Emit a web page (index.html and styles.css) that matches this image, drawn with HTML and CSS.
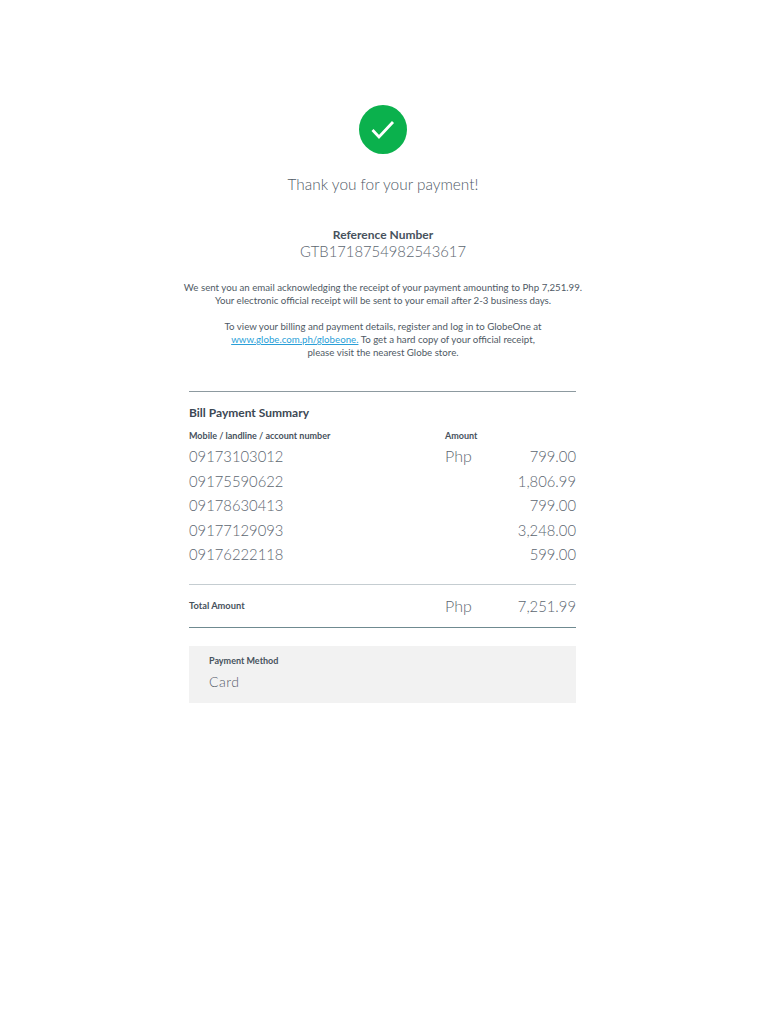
FILE: index.html
```html
<!DOCTYPE html>
<html lang="en">
<head>
  <meta charset="UTF-8" />
  <title>Thank you for your payment</title>
  <link rel="stylesheet" href="styles.css">
</head>
<body>
  <div class="container">
    <svg class="check" width="48" height="49" viewBox="0 0 48 49">
      <ellipse cx="24" cy="24.5" rx="24" ry="24.5" fill="#0bb14d"/>
      <path d="M13.5 25l6.5 7 14-15" fill="none" stroke="#fff" stroke-width="2.8"/>
    </svg>

    <h2>Thank you for your payment!</h2>

    <div class="ref-label">Reference Number</div>
    <div class="ref-number">GTB1718754982543617</div>

    <p class="note">
      We sent you an email acknowledging the receipt of your payment amounting to Php 7,251.99.<br>
      Your electronic official receipt will be sent to your email after 2-3 business days.
    </p>
    <p class="note note-second">
      To view your billing and payment details, register and log in to GlobeOne at<br>
      <a href="#">www.globe.com.ph/globeone.</a> To get a hard copy of your official receipt,<br>
      please visit the nearest Globe store.
    </p>

    <div class="summary">
      <h3>Bill Payment Summary</h3>
      <div class="row head">
        <span>Mobile / landline / account number</span>
        <span>Amount</span>
      </div>
      <div class="row item"><span>09173103012</span><span class="currency">Php</span><span class="amt">799.00</span></div>
      <div class="row item"><span>09175590622</span><span></span><span class="amt">1,806.99</span></div>
      <div class="row item"><span>09178630413</span><span></span><span class="amt">799.00</span></div>
      <div class="row item"><span>09177129093</span><span></span><span class="amt">3,248.00</span></div>
      <div class="row item"><span>09176222118</span><span></span><span class="amt">599.00</span></div>
      <div class="row total">
        <span class="total-label">Total Amount</span>
        <span class="currency">Php</span>
        <span class="amt">7,251.99</span>
      </div>
      <div class="method">
        <div class="method-label">Payment Method</div>
        <div class="method-value">Card</div>
      </div>
    </div>
  </div>
</body>
</html>
```

FILE: styles.css
```css
* {
  box-sizing: border-box;
  margin: 0;
  padding: 0;
  font-family: 'Lato', sans-serif;
}

body {
  background-color: #fff;
  color: #4a5560;
}

.container {
  width: 400px;
  margin-left: 183px;
  padding-top: 105px;
  text-align: center;
}

.check {
  display: block;
  margin: 0 auto;
}

h2 {
  font-weight: 300;
  font-size: 15.4px;
  line-height: 22px;
  margin-top: 19px;
  color: #4f5a66;
}

.ref-label {
  margin-top: 32px;
  font-size: 12px;
  font-weight: 700;
  line-height: 16px;
  color: #47525d;
}

.ref-number {
  font-size: 14.8px;
  font-weight: 300;
  line-height: 16px;
  color: #5c6670;
}

.note {
  margin-top: 22px;
  font-size: 9.7px;
  line-height: 13px;
  white-space: nowrap;
  color: #4f5a65;
}

.note-second {
  margin-top: 13px;
}

.note a {
  color: #2a9fd8;
}

.summary {
  width: 387px;
  margin: 32px 0 0 6px;
  border-top: 1px solid #8d9aa0;
  text-align: left;
}

h3 {
  margin-top: 13px;
  font-size: 12px;
  font-weight: 700;
  line-height: 16px;
  color: #3c4854;
}

.row {
  display: grid;
  grid-template-columns: 256px 50px 1fr;
}

.head {
  margin-top: 8px;
  font-size: 9px;
  font-weight: 700;
  line-height: 14px;
  color: #47525d;
}

.item {
  font-size: 14.8px;
  font-weight: 300;
  line-height: 24.6px;
  color: #5c6670;
}

.head + .item {
  margin-top: 1px;
}

.amt {
  text-align: right;
}

.currency {
  font-size: 16px;
}

.total {
  margin-top: 17px;
  height: 44px;
  border-top: 1px solid #c5cdd1;
  border-bottom: 1px solid #6f8a90;
  align-items: center;
  font-size: 14.8px;
  font-weight: 300;
  color: #5c6670;
}

.total-label {
  font-size: 9.3px;
  font-weight: 700;
  color: #47525d;
}

.method {
  margin-top: 18px;
  height: 57px;
  padding: 8px 20px;
  background: #f2f2f2;
}

.method-label {
  font-size: 9px;
  font-weight: 700;
  line-height: 14px;
  color: #47525d;
}

.method-value {
  margin-top: 4px;
  font-size: 14px;
  font-weight: 300;
  line-height: 20px;
  letter-spacing: 0.5px;
  color: #56606b;
}
```
